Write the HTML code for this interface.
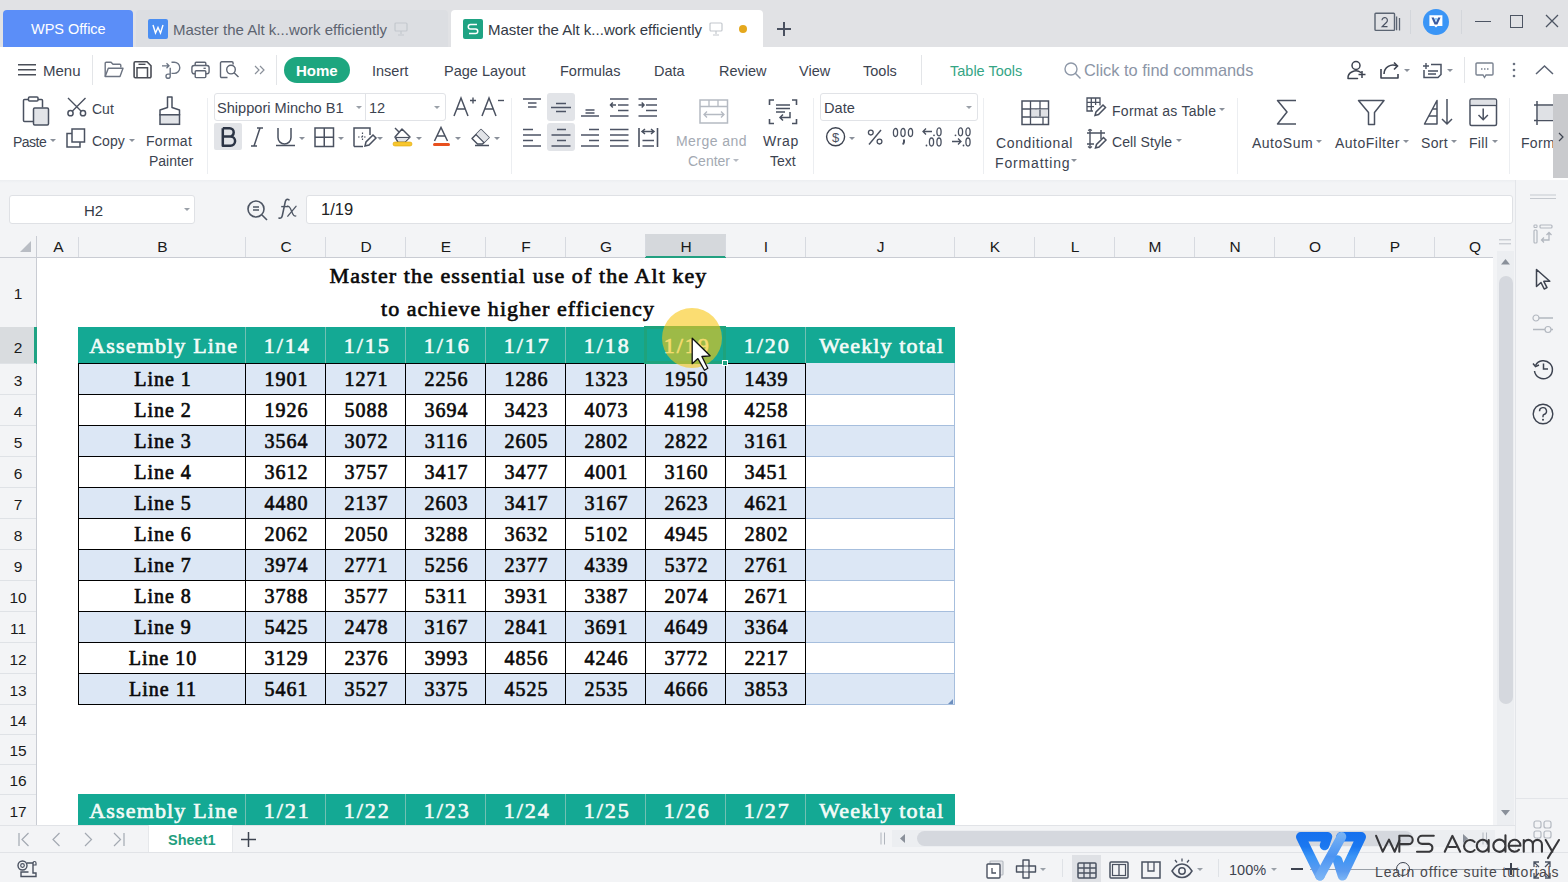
<!DOCTYPE html>
<html><head><meta charset="utf-8">
<style>
*{margin:0;padding:0;box-sizing:border-box}
html,body{width:1568px;height:882px;overflow:hidden;background:#fff;font-family:"Liberation Sans",sans-serif;color:#3c4350}
.a{position:absolute}
.t{position:absolute;white-space:nowrap;line-height:1}
svg{position:absolute;overflow:visible}
#titlebar{left:0;top:0;width:1568px;height:47px;background:#e1e2e5}
#menubar{left:0;top:47px;width:1568px;height:45px;background:#fff}
#ribbon{left:0;top:92px;width:1568px;height:88px;background:#fff}
#fbar{left:0;top:180px;width:1568px;height:56px;background:#f3f4f6}
#colhdr{left:0;top:236px;width:1493px;height:22px;background:#f3f4f6;border-bottom:1px solid #c9ccd3}
#rowhdr{left:0;top:258px;width:37px;height:567px;background:#f3f4f6;border-right:1px solid #c9ccd3}
#grid{left:37px;top:258px;width:1456px;height:567px;background:#fff}
#sheetbar{left:0;top:825px;width:1516px;height:27px;background:#f3f4f6;border-top:1px solid #e1e3e7}
#status{left:0;top:852px;width:1568px;height:30px;background:#f3f4f6;border-top:1px solid #e1e3e7}
#sidebar{left:1515px;top:180px;width:53px;height:672px;background:#f3f4f6;border-left:1px solid #e3e5e9}
.ch{position:absolute;top:0;height:21px;text-align:center;font-size:15.5px;line-height:21px;color:#1a1a1a}
.chs{position:absolute;top:1px;width:1px;height:20px;background:#d7dae0}
.rh{position:absolute;left:0;width:36px;text-align:center;font-size:15.5px;color:#1a1a1a}
.rhs{position:absolute;left:0;width:36px;height:1px;background:#dfe2e6}
.cell{position:absolute;text-align:center;font-family:"Liberation Serif",serif;font-weight:normal;-webkit-text-stroke:0.65px currentColor;white-space:nowrap}
.mi{font-size:15px;color:#3c4350}
.rb{font-size:14.5px;color:#3c4350}
.dd{position:absolute;width:0;height:0;border-left:4px solid transparent;border-right:4px solid transparent;border-top:4px solid #8a909a}
</style></head><body>

<!-- TITLE BAR -->
<div id="titlebar" class="a">
  <div class="a" style="left:3px;top:10px;width:130px;height:37px;background:#5b8ef8;border-radius:4px 4px 0 0"></div>
  <div class="t" style="left:31px;top:22px;font-size:14.5px;color:#fff">WPS Office</div>
  <div class="a" style="left:136px;top:10px;width:312px;height:37px;background:#dcdee2;border-radius:4px 4px 0 0"></div>
  <div class="a" style="left:148px;top:19px;width:20px;height:20px;background:#4a8ef2;border-radius:2px"></div>
  <svg style="left:148px;top:19px" width="20" height="20"><path d="M5 6 L7.5 14 L10 8.5 L12.5 14 L15 6" stroke="#fff" stroke-width="1.4" fill="none"/></svg>
  <div class="t" style="left:173px;top:22px;font-size:15px;color:#5d6470">Master the Alt k...work efficiently</div>
  <svg style="left:394px;top:22px" width="14" height="14"><rect x="1" y="1" width="12" height="8" rx="1" stroke="#c4c8ce" stroke-width="1.2" fill="none"/><path d="M7 9v3M4 13h6" stroke="#c4c8ce" stroke-width="1.2"/></svg>
  <div class="a" style="left:451px;top:10px;width:312px;height:37px;background:#fff;border-radius:4px 4px 0 0"></div>
  <div class="a" style="left:463px;top:19px;width:20px;height:20px;background:#1fa383;border-radius:2px"></div>
  <svg style="left:463px;top:19px" width="20" height="20"><path d="M14 5.5H7.5a2 2 0 0 0 0 4.5h5a2 2 0 0 1 0 4.5H6" stroke="#fff" stroke-width="1.5" fill="none"/></svg>
  <div class="t" style="left:488px;top:22px;font-size:15px;color:#333a45">Master the Alt k...work efficiently</div>
  <svg style="left:709px;top:22px" width="14" height="14"><rect x="1" y="1" width="12" height="8" rx="1" stroke="#c4c8ce" stroke-width="1.2" fill="none"/><path d="M7 9v3M4 13h6" stroke="#c4c8ce" stroke-width="1.2"/></svg>
  <div class="a" style="left:739px;top:25px;width:8px;height:8px;border-radius:4px;background:#e5a81d"></div>
  <svg style="left:776px;top:21px" width="16" height="16"><path d="M8 1v14M1 8h14" stroke="#4a5160" stroke-width="2"/></svg>
  <!-- right controls -->
  <svg style="left:1374px;top:11px" width="28" height="22"><rect x="1" y="2.2" width="19.5" height="17.2" rx="0.8" stroke="#5b6472" stroke-width="1.4" fill="none"/><path d="M22.6 5.5v13.8M25.5 7v12.5" stroke="#5b6472" stroke-width="1.3"/><path d="M8 9.2a2.7 2.7 0 1 1 4.6 2L8.2 15.7h5.3" stroke="#4a5262" stroke-width="1.2" fill="none"/></svg>
  <div class="a" style="left:1410px;top:10px;width:1px;height:24px;background:#d3d6db"></div>
  <div class="a" style="left:1423px;top:9px;width:26px;height:26px;border-radius:13px;background:#3a95f6"></div>
  <svg style="left:1423px;top:9px" width="26" height="26"><path d="M6.4 6.2h13v10.8h-4.8l-1.6 1.5-1.6-1.5H6.4z" fill="#fff"/><path d="M8.4 8.6h2.5l2.1 5 2.1-5h2.5l-3.2 6.8h-2.8z" fill="#3a5aa0"/><path d="M11.4 9l1.6 3.4 1.6-3.4" fill="#8fd0ff"/></svg>
  <div class="a" style="left:1461px;top:10px;width:1px;height:24px;background:#d3d6db"></div>
  <div class="a" style="left:1475px;top:21px;width:16px;height:1.3px;background:#4d5563"></div>
  <div class="a" style="left:1510px;top:15px;width:13px;height:13px;border:1.3px solid #4d5563"></div>
  <svg style="left:1545px;top:14px" width="14" height="14"><path d="M1 1L13 13M13 1L1 13" stroke="#4d5563" stroke-width="1.3"/></svg>
</div>

<!-- MENU BAR -->
<div id="menubar" class="a">
  <svg style="left:18px;top:17px" width="18" height="12"><path d="M0 0.75h18M0 5.75h18M0 10.75h18" stroke="#4a4f58" stroke-width="1.5"/></svg>
  <div class="t mi" style="left:43px;top:16px">Menu</div>
  <div class="a" style="left:92px;top:8px;width:1px;height:30px;background:#e3e5e8"></div>
  <svg style="left:104px;top:14px" width="20" height="18"><path d="M1.2 15.5V2.2a1 1 0 0 1 1-1H7l2 2h6.8a1 1 0 0 1 1 1V6.5" stroke="#6d7482" stroke-width="1.4" fill="none"/><path d="M1.2 15.5L4.3 7.2H19L16 15.5z" stroke="#6d7482" stroke-width="1.4" fill="none" stroke-linejoin="round"/></svg>
  <svg style="left:133px;top:14px" width="19" height="18"><path d="M2.3 0.8H14L18 4.8V15.5a1.2 1.2 0 0 1-1.2 1.2H2.3a1.2 1.2 0 0 1-1.2-1.2V2a1.2 1.2 0 0 1 1.2-1.2z" stroke="#4a4d55" stroke-width="1.6" fill="none"/><path d="M5.5 3.3H12.5" stroke="#4a4d55" stroke-width="1.4"/><path d="M4 16.5V6.8H14.5V16.5" stroke="#4a4d55" stroke-width="1.5" fill="none"/></svg>
  <svg style="left:161px;top:14px" width="21" height="19"><path d="M1 4.8h7M5.5 2.3L8 4.8 5.5 7.3" stroke="#6a7382" stroke-width="1.3" fill="none"/><path d="M10.5 1.2h2.7a5.6 5.6 0 0 1 0 11.2H10.5" stroke="#6a7382" stroke-width="1.4" fill="none"/><path d="M9.2 6.8V15.2a2.1 2.1 0 1 1-2.1-2.1h2.1" stroke="#6a7382" stroke-width="1.4" fill="none"/></svg>
  <svg style="left:191px;top:14px" width="19" height="18"><path d="M4.2 4.5V2.2a1 1 0 0 1 1-1h8.6a1 1 0 0 1 1 1V4.5" stroke="#5e6573" stroke-width="1.4" fill="none"/><rect x="0.9" y="4.5" width="17.2" height="8.3" rx="2.2" stroke="#5e6573" stroke-width="1.4" fill="none"/><rect x="4.2" y="9.8" width="10.6" height="6.8" rx="1" stroke="#5e6573" stroke-width="1.4" fill="#fff"/><path d="M12.5 7.3h2.3" stroke="#5e6573" stroke-width="1.3"/></svg>
  <svg style="left:219px;top:14px" width="21" height="18"><path d="M8.5 16.5H2.7a1.2 1.2 0 0 1-1.2-1.2V2a1.2 1.2 0 0 1 1.2-1.2h10.2a1.2 1.2 0 0 1 1.2 1.2V3.5" stroke="#5e6573" stroke-width="1.4" fill="none"/><circle cx="12" cy="8.6" r="4.3" stroke="#5e6573" stroke-width="1.4" fill="#fff"/><path d="M15.1 11.7L19.5 16" stroke="#5e6573" stroke-width="1.4"/></svg>
  <svg style="left:254px;top:18px" width="11" height="10"><path d="M1 1l4 4-4 4M6 1l4 4-4 4" stroke="#8a909a" stroke-width="1.2" fill="none"/></svg>
  <div class="a" style="left:276px;top:8px;width:1px;height:30px;background:#e3e5e8"></div>
  <div class="a" style="left:284px;top:10px;width:66px;height:26px;border-radius:13px;background:#1da67f"></div>
  <div class="t" style="left:296px;top:16px;font-size:15px;font-weight:bold;color:#fff">Home</div>
  <div class="t mi" style="left:372px;top:16.5px;font-size:14.5px">Insert</div>
  <div class="t mi" style="left:444px;top:16.5px;font-size:14.5px">Page Layout</div>
  <div class="t mi" style="left:560px;top:16.5px;font-size:14.5px">Formulas</div>
  <div class="t mi" style="left:654px;top:16.5px;font-size:14.5px">Data</div>
  <div class="t mi" style="left:719px;top:16.5px;font-size:14.5px">Review</div>
  <div class="t mi" style="left:799px;top:16.5px;font-size:14.5px">View</div>
  <div class="t mi" style="left:863px;top:16.5px;font-size:14.5px">Tools</div>
  <div class="a" style="left:921px;top:8px;width:1px;height:30px;background:#e3e5e8"></div>
  <div class="t mi" style="left:950px;top:16.5px;font-size:14.5px;color:#35a585">Table Tools</div>
  <svg style="left:1064px;top:15px" width="18" height="18"><circle cx="7" cy="7" r="6" stroke="#8e98a8" stroke-width="1.4" fill="none"/><path d="M11.3 11.3L16.5 16.5" stroke="#8e98a8" stroke-width="1.5"/></svg>
  <div class="t" style="left:1084px;top:15px;font-size:16.4px;color:#8b95a6">Click to find commands</div>
  <svg style="left:1347px;top:13px" width="21" height="20"><circle cx="9" cy="5.5" r="4" stroke="#3d4350" stroke-width="1.5" fill="none"/><path d="M1 18.5a8 7 0 0 1 13-6M1 18.5h9.5" stroke="#3d4350" stroke-width="1.5" fill="none" stroke-linecap="round"/><path d="M15 11v7M11.5 14.5h7" stroke="#3d4350" stroke-width="1.5"/></svg>
  <svg style="left:1380px;top:14px" width="22" height="18"><path d="M1 8v9h17v-4" stroke="#3d4350" stroke-width="1.6" fill="none" stroke-linejoin="round"/><path d="M4 13a9 9 0 0 1 13-8" stroke="#3d4350" stroke-width="1.6" fill="none"/><path d="M14 1.5l3.5 3.5L14 8.5" stroke="#3d4350" stroke-width="1.6" fill="none"/></svg>
  <div class="dd" style="left:1404px;top:22px;border-width:3.5px 3.5px 0 3.5px"></div>
  <svg style="left:1422px;top:14px" width="22" height="19"><path d="M1 5h6M4 2v6" stroke="#4a5262" stroke-width="1.4"/><path d="M9 3.5h10v10l-3 3H2V9" stroke="#4a5262" stroke-width="1.5" fill="none"/><path d="M6 10h10M6 13h8" stroke="#4a5262" stroke-width="1.4"/></svg>
  <div class="dd" style="left:1447px;top:22px;border-width:3.5px 3.5px 0 3.5px"></div>
  <div class="a" style="left:1464px;top:10px;width:1px;height:26px;background:#e3e5e8"></div>
  <svg style="left:1475px;top:15px" width="19" height="17"><path d="M2 1h15a1 1 0 0 1 1 1v10a1 1 0 0 1-1 1h-6l-1.5 2.5L8 13H2a1 1 0 0 1-1-1V2a1 1 0 0 1 1-1z" stroke="#7a8290" stroke-width="1.4" fill="none"/><path d="M6 7h1.5M9 7h1.5M12 7h1.5" stroke="#7a8290" stroke-width="1.4"/></svg>
  <svg style="left:1512px;top:15px" width="4" height="16"><circle cx="2" cy="2" r="1.3" fill="#6a7180"/><circle cx="2" cy="8" r="1.3" fill="#6a7180"/><circle cx="2" cy="14" r="1.3" fill="#6a7180"/></svg>
  <svg style="left:1535px;top:18px" width="19" height="10"><path d="M1 9l8.5-8 8.5 8" stroke="#5a6272" stroke-width="1.5" fill="none"/></svg>
</div>

<!-- RIBBON -->
<div id="ribbon" class="a">
  <!-- clipboard -->
  <svg style="left:22px;top:4px" width="28" height="30"><path d="M6 3.5H2.5a1 1 0 0 0-1 1v20a1 1 0 0 0 1 1h8.5" stroke="#4a5160" stroke-width="1.5" fill="none"/><path d="M16 3.5h3.5a1 1 0 0 1 1 1v7" stroke="#4a5160" stroke-width="1.5" fill="none"/><rect x="6.5" y="1" width="9.5" height="4" rx="1" stroke="#4a5160" stroke-width="1.5" fill="none"/><rect x="11.5" y="12" width="15" height="17" rx="1.2" stroke="#4a5160" stroke-width="1.5" fill="#e2e4e8"/></svg>
  <div class="t rb" style="left:13px;top:42.5px;font-size:14px;letter-spacing:-0.5px">Paste</div>
  <div class="dd" style="left:50px;top:47px;border-width:3px 3px 0 3px"></div>
  <svg style="left:66px;top:5px" width="22" height="20"><path d="M2 1l13 13M19.5 1L6.5 14" stroke="#4a5160" stroke-width="1.4"/><circle cx="4.5" cy="16.2" r="2.6" stroke="#4a5160" stroke-width="1.5" fill="none"/><circle cx="17" cy="16.2" r="2.6" stroke="#4a5160" stroke-width="1.5" fill="none"/></svg>
  <div class="t rb" style="left:92px;top:10px;font-size:14px">Cut</div>
  <svg style="left:66px;top:36px" width="20" height="20"><rect x="6" y="1" width="12.5" height="13" stroke="#4a5160" stroke-width="1.5" fill="none"/><path d="M6 5.5H1v13.5h13V14" stroke="#4a5160" stroke-width="1.5" fill="none"/></svg>
  <div class="t rb" style="left:92px;top:42px;font-size:14px">Copy</div>
  <div class="dd" style="left:129px;top:47px;border-width:3px 3px 0 3px"></div>
  <svg style="left:158px;top:4px" width="24" height="30"><path d="M9.5 1h4.5v10.5l7.5 2.5v5H2v-5l7.5-2.5z" stroke="#4a5160" stroke-width="1.5" fill="none" stroke-linejoin="round"/><rect x="2" y="18.8" width="19.5" height="9.5" stroke="#4a5160" stroke-width="1.5" fill="#e2e4e8"/></svg>
  <div class="t rb" style="left:146px;top:42px;font-size:14px;letter-spacing:0.3px">Format</div>
  <div class="t rb" style="left:149px;top:62px;font-size:14px">Painter</div>
  <div class="a" style="left:207px;top:6px;width:1px;height:76px;background:#eceef1"></div>
  <!-- font -->
  <div class="a" style="left:214px;top:1px;width:232px;height:28px;border:1px solid #e1e3e7;border-radius:3px"></div>
  <div class="a" style="left:365px;top:2px;width:1px;height:26px;background:#e1e3e7"></div>
  <div class="t" style="left:217px;top:9px;font-size:14.6px;color:#3c4350">Shippori Mincho B1</div>
  <div class="dd" style="left:356px;top:14px;border-width:3.5px 3.5px 0 3.5px;border-top-color:#9aa0a8"></div>
  <div class="t" style="left:369px;top:9px;font-size:14.6px;color:#3c4350">12</div>
  <div class="dd" style="left:434px;top:14px;border-width:3.5px 3.5px 0 3.5px;border-top-color:#9aa0a8"></div>
  <svg style="left:453px;top:4px" width="24" height="22"><path d="M1 20L8 2l7 18M3.8 13h8.5" stroke="#4a5160" stroke-width="1.5" fill="none"/><path d="M17 4.5h6M20 1.5v6" stroke="#4a5160" stroke-width="1.4"/></svg>
  <svg style="left:481px;top:4px" width="24" height="22"><path d="M1 20L8 2l7 18M3.8 13h8.5" stroke="#4a5160" stroke-width="1.5" fill="none"/><path d="M17 4.5h6" stroke="#4a5160" stroke-width="1.4"/></svg>
  <div class="a" style="left:214px;top:31px;width:28px;height:27px;background:#e2e4e8;border-radius:2px"></div>
  <svg style="left:220px;top:35px" width="18" height="21"><path d="M2.8 1.3V18.7H10.5a4.6 4.6 0 0 0 0-9.2H2.8M2.8 1.3H9.6a4.1 4.1 0 0 1 0 8.2" stroke="#2b3445" stroke-width="2.5" fill="none" stroke-linejoin="round"/></svg>
  <svg style="left:250px;top:35px" width="14" height="20"><path d="M10 1L4 19M7 1h6M1 19h6" stroke="#4a5160" stroke-width="1.5"/></svg>
  <svg style="left:275px;top:35px" width="21" height="20"><path d="M3 1v9.5a6.5 6.5 0 0 0 13 0V1" stroke="#4a5160" stroke-width="1.5" fill="none"/><path d="M1 18.5h19" stroke="#4a5160" stroke-width="1.5"/></svg>
  <div class="dd" style="left:299px;top:45px;border-width:3.5px 3.5px 0 3.5px;border-top-color:#8a909a"></div>
  <svg style="left:314px;top:35px" width="21" height="21"><rect x="1" y="1" width="18.5" height="18.5" stroke="#4a5160" stroke-width="1.5" fill="none"/><path d="M10.25 1v18.5M1 10.25h18.5" stroke="#4a5160" stroke-width="1.5"/></svg>
  <div class="dd" style="left:338px;top:45px;border-width:3.5px 3.5px 0 3.5px;border-top-color:#8a909a"></div>
  <svg style="left:353px;top:35px" width="23" height="21"><path d="M1 19.5V1h16v7" stroke="#4a5160" stroke-width="1.5" fill="none"/><path d="M5 10h9M9.5 5.5v9" stroke="#4a5160" stroke-width="1.2" stroke-dasharray="1.6 1.4"/><path d="M1 19.5h9" stroke="#4a5160" stroke-width="1.5"/><path d="M12 19l1-4 7-7 3 3-7 7z" stroke="#4a5160" stroke-width="1.5" fill="none"/></svg>
  <div class="dd" style="left:377px;top:45px;border-width:3.5px 3.5px 0 3.5px;border-top-color:#8a909a"></div>
  <svg style="left:392px;top:34px" width="22" height="21"><path d="M3 11L10 3l8 8-5 5H6z" stroke="#4a5160" stroke-width="1.5" fill="none" stroke-linejoin="round"/><path d="M4 11.5h13" stroke="#4a5160" stroke-width="1.2"/><path d="M5 12l1.5 3.5h6.5l3.5-3.5" fill="#e2e4e8"/><path d="M7 6L3 2" stroke="#4a5160" stroke-width="1.5"/><rect x="1" y="16" width="19" height="4" rx="2" fill="#f7c62f" stroke="#e0a800" stroke-width="0.6"/></svg>
  <div class="dd" style="left:416px;top:45px;border-width:3.5px 3.5px 0 3.5px;border-top-color:#8a909a"></div>
  <svg style="left:432px;top:34px" width="20" height="21"><path d="M2.5 15L9 1.5 15.5 15M5 10h8.5" stroke="#4a5160" stroke-width="1.5" fill="none"/><rect x="1" y="17" width="17" height="3" rx="1.5" fill="#e8501e"/></svg>
  <div class="dd" style="left:455px;top:45px;border-width:3.5px 3.5px 0 3.5px;border-top-color:#8a909a"></div>
  <svg style="left:470px;top:35px" width="22" height="20"><path d="M2 11.5L11 2.5l8 8-6.5 6.5h-5z" stroke="#4a5160" stroke-width="1.5" fill="none" stroke-linejoin="round"/><path d="M6 7.5l8 8" stroke="#4a5160" stroke-width="1.5"/><path d="M11 2.5l8 8-4.5 4.5-8-8z" fill="#e2e4e8"/><path d="M5 18.5h14" stroke="#4a5160" stroke-width="1.5"/></svg>
  <div class="dd" style="left:494px;top:45px;border-width:3.5px 3.5px 0 3.5px;border-top-color:#8a909a"></div>
  <div class="a" style="left:511px;top:6px;width:1px;height:76px;background:#eceef1"></div>
  <!-- align -->
  <div class="a" style="left:547px;top:1px;width:28px;height:28px;background:#e2e4e8;border-radius:3px"></div>
  <div class="a" style="left:547px;top:31px;width:28px;height:28px;background:#e2e4e8;border-radius:3px"></div>
  <svg style="left:0;top:0" width="700" height="80"><path d="M523 7H541M528 11H536.5M528 15H536.5M556 11.5H566M551 15.5H571M556 19.5H566M585.5 18H594.5M585.5 21H594.5M581 24H599M610 7H628.5M618 13H628.5M618 18.5H628.5M610 24H628.5M638.5 7H657M646 13H657M646 18.5H657M638.5 24H657M523 37.5H533M523 43H541M523 48.5H533M523 54H541M557 37.5H566M551.5 43H570.5M557 48.5H566M551.5 54H570.5M589 37.5H599M581 43H599M589 48.5H599M581 54H599M610 37.5H628.5M610 43H628.5M610 48.5H628.5M610 54H628.5M642.5 48.5H654M642.5 54H654" stroke="#4d5465" stroke-width="1.65" fill="none"/>
  <path d="M639 36V55M657.5 36V55" stroke="#4a5160" stroke-width="1.6"/>
  <path d="M642 39.5H654M645 37L642 39.5L645 42M651 37L654 39.5L651 42" stroke="#4a5160" stroke-width="1.5" fill="none"/>
  <path d="M610.5 13H616M612.8 10.5L610.5 13L612.8 15.5" stroke="#4a5160" stroke-width="1.5" fill="none"/>
  <path d="M638.5 13H644M641.7 10.5L644 13L641.7 15.5" stroke="#4a5160" stroke-width="1.5" fill="none"/>
</svg>
  <svg style="left:699px;top:7px" width="30" height="25"><rect x="1" y="1" width="27.5" height="23" stroke="#b5bac2" stroke-width="1.5" fill="none"/><path d="M1 7.5h27.5M10 1v6.5M19 1v6.5M5 15.5h20M8 12.5l-3 3 3 3M22 12.5l3 3-3 3" stroke="#b5bac2" stroke-width="1.3" fill="none"/></svg>
  <div class="t" style="left:676px;top:42px;font-size:14px;color:#a3a9b2;letter-spacing:0.45px">Merge and</div>
  <div class="t" style="left:688px;top:62px;font-size:14px;color:#a3a9b2">Center</div>
  <div class="dd" style="left:733px;top:67px;border-width:3px 3px 0 3px;border-top-color:#b5bac2"></div>
  <svg style="left:768px;top:7px" width="30" height="26"><path d="M6 1H1.5v5M24 1h4.5v5M1.5 20v4.5H6M28.5 20v4.5H24" stroke="#4a5160" stroke-width="1.6" fill="none"/><path d="M8 6h14M8 9.5h14M8 13h9" stroke="#4a5160" stroke-width="1.4"/><path d="M22 13v5.5H12M15 15.5l-3 3 3 3" stroke="#4a5160" stroke-width="1.5" fill="none"/></svg>
  <div class="t rb" style="left:763px;top:42px;font-size:14px;letter-spacing:0.7px">Wrap</div>
  <div class="t rb" style="left:770px;top:62px;font-size:14px">Text</div>
  <div class="a" style="left:813px;top:6px;width:1px;height:76px;background:#eceef1"></div>
  <!-- number -->
  <div class="a" style="left:820px;top:1px;width:158px;height:28px;border:1px solid #e1e3e7;border-radius:3px"></div>
  <div class="t" style="left:824px;top:9px;font-size:14.6px;color:#3c4350">Date</div>
  <div class="dd" style="left:966px;top:14px;border-width:3.5px 3.5px 0 3.5px;border-top-color:#9aa0a8"></div>
  <svg style="left:815px;top:28px" width="170" height="35"><circle cx="20.6" cy="16.8" r="9" stroke="#3d4350" stroke-width="1.4" fill="none"/><text x="20.6" y="21.5" font-size="13" text-anchor="middle" fill="#4a5160" font-family="Liberation Sans">$</text><circle cx="55.8" cy="12.6" r="2.4" stroke="#4a5160" fill="none" stroke-width="1.3"/><circle cx="64.5" cy="21.6" r="2.4" stroke="#4a5160" fill="none" stroke-width="1.3"/><path d="M54 24.5L66 10" stroke="#4a5160" stroke-width="1.4"/><ellipse cx="80.5" cy="12.5" rx="2.1" ry="4" stroke="#4a5160" fill="none" stroke-width="1.3"/><ellipse cx="88" cy="12.5" rx="2.1" ry="4" stroke="#4a5160" fill="none" stroke-width="1.3"/><ellipse cx="95.5" cy="12.5" rx="2.1" ry="4" stroke="#4a5160" fill="none" stroke-width="1.3"/><path d="M89 19.5v2.5l-1 2.5" stroke="#4a5160" stroke-width="2" fill="none"/><path d="M108 11.5h9M111 8.5l-3 3 3 3" stroke="#4a5160" stroke-width="1.3" fill="none"/><circle cx="119" cy="15.3" r="0.9" fill="#4a5160"/><ellipse cx="124" cy="11.8" rx="2.1" ry="4" stroke="#4a5160" fill="none" stroke-width="1.3"/><circle cx="111.5" cy="25.5" r="0.9" fill="#4a5160"/><ellipse cx="116.5" cy="22" rx="2.1" ry="4" stroke="#4a5160" fill="none" stroke-width="1.3"/><ellipse cx="124" cy="22" rx="2.1" ry="4" stroke="#4a5160" fill="none" stroke-width="1.3"/><circle cx="140.5" cy="15.3" r="0.9" fill="#4a5160"/><ellipse cx="145.5" cy="11.8" rx="2.1" ry="4" stroke="#4a5160" fill="none" stroke-width="1.3"/><ellipse cx="153" cy="11.8" rx="2.1" ry="4" stroke="#4a5160" fill="none" stroke-width="1.3"/><path d="M137 21.5h9M143 18.5l3 3-3 3" stroke="#4a5160" stroke-width="1.3" fill="none"/><circle cx="148.5" cy="25.5" r="0.9" fill="#4a5160"/><ellipse cx="153" cy="22" rx="2.1" ry="4" stroke="#4a5160" fill="none" stroke-width="1.3"/></svg>
  <div class="dd" style="left:849px;top:45px;border-width:3.5px 3.5px 0 3.5px;border-top-color:#8a909a"></div>
  <div class="a" style="left:983px;top:6px;width:1px;height:76px;background:#eceef1"></div>
  <!-- styles -->
  <svg style="left:1021px;top:8px" width="29" height="26"><rect x="1" y="1" width="26.5" height="23.5" stroke="#4a5160" stroke-width="1.5" fill="none"/><path d="M1 9h26.5M1 17h26.5M9.5 1v23.5M19 1v8M15 9v8M22 17v7.5" stroke="#4a5160" stroke-width="1.3"/><rect x="10" y="9.5" width="17" height="7" fill="#dfe1e5"/><path d="M9.5 9v8M19 9.5v7" stroke="#4a5160" stroke-width="1.3"/></svg>
  <div class="t rb" style="left:996px;top:43.5px;font-size:14px;letter-spacing:0.64px">Conditional</div>
  <div class="t rb" style="left:995px;top:63.5px;font-size:14px;letter-spacing:0.85px">Formatting</div>
  <div class="dd" style="left:1071px;top:67px;border-width:3px 3px 0 3px"></div>
  <svg style="left:1086px;top:5px" width="22" height="20"><path d="M14 8.5V1H1v13h6M1 5.3h13M1 9.6h7M5.3 1v13M9.6 1v7" stroke="#4a5160" stroke-width="1.3" fill="none"/><path d="M9 18.5l1-3.5 7-7 2.5 2.5-7 7z" stroke="#4a5160" stroke-width="1.5" fill="none"/></svg>
  <div class="t rb" style="left:1112px;top:11.5px;font-size:14px;letter-spacing:0.28px">Format as Table</div>
  <div class="dd" style="left:1219px;top:16px;border-width:3px 3px 0 3px"></div>
  <svg style="left:1086px;top:37px" width="22" height="20"><path d="M4 1v18M1 4h18M15 1v9M1 15h7" stroke="#4a5160" stroke-width="1.4"/><path d="M2 1.5l2 -1 2 1M2 17.5l2 1.5 2-1.5" stroke="#4a5160" stroke-width="1.2" fill="none"/><path d="M9.5 19l1-3.5 7-7 2.5 2.5-7 7z" stroke="#4a5160" stroke-width="1.5" fill="none"/></svg>
  <div class="t rb" style="left:1112px;top:43px;font-size:14px;letter-spacing:0.1px">Cell Style</div>
  <div class="dd" style="left:1176px;top:47px;border-width:3px 3px 0 3px"></div>
  <div class="a" style="left:1237px;top:6px;width:1px;height:76px;background:#eceef1"></div>
  <!-- editing -->
  <svg style="left:1275px;top:7px" width="23" height="27"><path d="M21 1.5H2.5L12 13 2.5 25H21" stroke="#4a5160" stroke-width="1.5" fill="none" stroke-linejoin="round"/></svg>
  <div class="t rb" style="left:1252px;top:43.5px;font-size:14px;letter-spacing:0.5px">AutoSum</div>
  <div class="dd" style="left:1316px;top:48px;border-width:3px 3px 0 3px"></div>
  <svg style="left:1357px;top:7px" width="29" height="27"><path d="M1.5 1.5h25.5L17.5 13.5V25.5h-6V13.5z" stroke="#4a5160" stroke-width="1.5" fill="none" stroke-linejoin="round"/></svg>
  <div class="t rb" style="left:1335px;top:43.5px;font-size:14px;letter-spacing:0.5px">AutoFilter</div>
  <div class="dd" style="left:1403px;top:48px;border-width:3px 3px 0 3px"></div>
  <svg style="left:1423px;top:6px" width="31" height="28"><path d="M1.5 26L14 2.5V26z" stroke="#4a5160" stroke-width="1.5" fill="none" stroke-linejoin="round"/><path d="M6 18h8M10 11h4" stroke="#4a5160" stroke-width="1.3"/><path d="M24 1v25M19 21l5 5 5-5" stroke="#4a5160" stroke-width="1.5" fill="none"/></svg>
  <div class="t rb" style="left:1421px;top:43.5px;font-size:14px;letter-spacing:0.3px">Sort</div>
  <div class="dd" style="left:1451px;top:48px;border-width:3px 3px 0 3px"></div>
  <svg style="left:1469px;top:6px" width="29" height="29"><rect x="1" y="1" width="26.5" height="26.5" rx="1.5" stroke="#4a5160" stroke-width="1.5" fill="none"/><rect x="1.8" y="1.8" width="25" height="5.5" fill="#dfe1e5"/><path d="M1 7.5h26.5" stroke="#4a5160" stroke-width="1.3"/><path d="M14.2 10.5v11M9.5 17l4.7 4.7 4.7-4.7" stroke="#4a5160" stroke-width="1.5" fill="none"/></svg>
  <div class="t rb" style="left:1469px;top:43.5px;font-size:14px;letter-spacing:0.3px">Fill</div>
  <div class="dd" style="left:1492px;top:48px;border-width:3px 3px 0 3px"></div>
  <div class="a" style="left:1509px;top:6px;width:1px;height:76px;background:#eceef1"></div>
  <svg style="left:1533px;top:8px" width="22" height="25"><path d="M4 1v24M1 5h21M1 20.5h21" stroke="#4a5160" stroke-width="1.5"/><rect x="5" y="6" width="17" height="14" fill="#dfe1e5"/></svg>
  <div class="t rb" style="left:1521px;top:43.5px;font-size:14px;letter-spacing:0.3px">Form</div>
  <div class="a" style="left:1553px;top:2px;width:15px;height:84px;background:#c9cacd"></div>
  <svg style="left:1558px;top:40px" width="6" height="10"><path d="M1 1l4 4-4 4" stroke="#3d4350" stroke-width="1.2" fill="none"/></svg>
  
</div>

<!-- FORMULA BAR -->
<div id="fbar" class="a">
  <div class="a" style="left:0;top:0;width:1568px;height:3px;background:linear-gradient(#eceef1,#f3f4f6)"></div>
  <div class="a" style="left:9px;top:15px;width:186px;height:29px;background:#fff;border:1px solid #dfe1e5;border-radius:3px"></div>
  <div class="t" style="left:84px;top:23px;font-size:15px;color:#333a45">H2</div>
  <div class="dd" style="left:184px;top:28px;border-width:3px 3px 0 3px;border-top-color:#9aa0a8"></div>
  <svg style="left:246px;top:19px" width="24" height="24"><circle cx="10" cy="10" r="8" stroke="#4d5563" stroke-width="1.6" fill="none"/><path d="M16 16l5 5" stroke="#4d5563" stroke-width="1.6"/><path d="M7 8h6M7 11h6" stroke="#4d5563" stroke-width="1.3"/></svg>
  <svg style="left:276px;top:17px" width="22" height="24"><path d="M13 2.8C11.3 1.6 9.8 2.4 9.3 4.6L6.3 18.6C5.8 20.9 4.4 21.6 3 21" stroke="#4d5563" stroke-width="1.6" fill="none" stroke-linecap="round"/><path d="M5.2 9.6H12.6" stroke="#4d5563" stroke-width="1.4"/><path d="M11.5 9.2C12.9 9 13.6 9.8 14.4 11.6L16.8 17C17.6 18.8 18.4 19.4 19.8 19" stroke="#4d5563" stroke-width="1.3" fill="none" stroke-linecap="round"/><path d="M20 9.3L11.8 19.2" stroke="#4d5563" stroke-width="1.3" stroke-linecap="round"/></svg>
  <div class="a" style="left:306px;top:15px;width:1207px;height:29px;background:#fff;border:1px solid #dfe1e5;border-radius:3px"></div>
  <div class="t" style="left:321px;top:21px;font-size:16.5px;color:#222">1/19</div>
</div>

<!-- COLUMN HEADERS -->
<div id="colhdr" class="a"><div class="ch" style="left:38px;width:41px">A</div>
<div class="ch" style="left:79px;width:167px">B</div>
<div class="chs" style="left:78px"></div>
<div class="ch" style="left:246px;width:80px">C</div>
<div class="chs" style="left:245px"></div>
<div class="ch" style="left:326px;width:80px">D</div>
<div class="chs" style="left:325px"></div>
<div class="ch" style="left:406px;width:80px">E</div>
<div class="chs" style="left:405px"></div>
<div class="ch" style="left:486px;width:80px">F</div>
<div class="chs" style="left:485px"></div>
<div class="ch" style="left:566px;width:80px">G</div>
<div class="chs" style="left:565px"></div>
<div class="a" style="left:645px;top:-2px;width:81px;height:24px;background:#d5d8dc;border-bottom:2px solid #22a081"></div>
<div class="ch" style="left:646px;width:80px">H</div>
<div class="chs" style="left:645px"></div>
<div class="ch" style="left:726px;width:80px">I</div>
<div class="chs" style="left:725px"></div>
<div class="ch" style="left:806px;width:149px">J</div>
<div class="chs" style="left:805px"></div>
<div class="ch" style="left:955px;width:80px">K</div>
<div class="chs" style="left:954px"></div>
<div class="ch" style="left:1035px;width:80px">L</div>
<div class="chs" style="left:1034px"></div>
<div class="ch" style="left:1115px;width:80px">M</div>
<div class="chs" style="left:1114px"></div>
<div class="ch" style="left:1195px;width:80px">N</div>
<div class="chs" style="left:1194px"></div>
<div class="ch" style="left:1275px;width:80px">O</div>
<div class="chs" style="left:1274px"></div>
<div class="ch" style="left:1355px;width:80px">P</div>
<div class="chs" style="left:1354px"></div>
<div class="ch" style="left:1435px;width:80px">Q</div>
<div class="chs" style="left:1434px"></div>
<svg style="left:20px;top:5px" width="11" height="11"><path d="M11 0V11H0Z" fill="#b9bdc4"/></svg><svg style="display:none"><path d="M12 0V12H0Z" fill="#b9bdc4"/></svg>
<div class="chs" style="left:36px;top:0;height:21px;background:#c9ccd3"></div></div>
<div id="rowhdr" class="a"><div class="rh" style="top:28.0px;line-height:15px">1</div>
<div class="rhs" style="top:69px"></div>
<div class="a" style="left:0;top:69px;width:36px;height:37px;background:#d9dcdf"></div>
<div class="a" style="left:34px;top:69px;width:3px;height:37px;background:#1fa383"></div>
<div class="rh" style="top:81.5px;line-height:15px">2</div>
<div class="rhs" style="top:105px"></div>
<div class="rh" style="top:115.0px;line-height:15px">3</div>
<div class="rhs" style="top:136px"></div>
<div class="rh" style="top:146.0px;line-height:15px">4</div>
<div class="rhs" style="top:167px"></div>
<div class="rh" style="top:177.0px;line-height:15px">5</div>
<div class="rhs" style="top:198px"></div>
<div class="rh" style="top:208.0px;line-height:15px">6</div>
<div class="rhs" style="top:229px"></div>
<div class="rh" style="top:239.0px;line-height:15px">7</div>
<div class="rhs" style="top:260px"></div>
<div class="rh" style="top:270.0px;line-height:15px">8</div>
<div class="rhs" style="top:291px"></div>
<div class="rh" style="top:301.0px;line-height:15px">9</div>
<div class="rhs" style="top:322px"></div>
<div class="rh" style="top:332.0px;line-height:15px">10</div>
<div class="rhs" style="top:353px"></div>
<div class="rh" style="top:363.0px;line-height:15px">11</div>
<div class="rhs" style="top:384px"></div>
<div class="rh" style="top:394.0px;line-height:15px">12</div>
<div class="rhs" style="top:415px"></div>
<div class="rh" style="top:425.0px;line-height:15px">13</div>
<div class="rhs" style="top:446px"></div>
<div class="rh" style="top:454.5px;line-height:15px">14</div>
<div class="rhs" style="top:476px"></div>
<div class="rh" style="top:484.5px;line-height:15px">15</div>
<div class="rhs" style="top:506px"></div>
<div class="rh" style="top:514.5px;line-height:15px">16</div>
<div class="rhs" style="top:536px"></div>
<div class="rh" style="top:546.0px;line-height:15px">17</div>
<div class="rhs" style="top:567px"></div></div>
<div id="grid" class="a"><div class="cell" style="left:43px;top:4.5px;width:877px;color:#0a0a0a;font-size:22px;letter-spacing:1.09px;line-height:26px">Master the essential use of the Alt key</div>
<div class="cell" style="left:42.5px;top:38px;width:877px;color:#0a0a0a;font-size:22px;letter-spacing:1.05px;line-height:26px">to achieve higher efficiency</div>
<div class="a" style="left:41px;top:69px;width:877px;height:36px;background:#14a994"></div>
<div class="a" style="left:208px;top:69px;width:1px;height:36px;background:#72c0b2"></div>
<div class="a" style="left:288px;top:69px;width:1px;height:36px;background:#72c0b2"></div>
<div class="a" style="left:368px;top:69px;width:1px;height:36px;background:#72c0b2"></div>
<div class="a" style="left:448px;top:69px;width:1px;height:36px;background:#72c0b2"></div>
<div class="a" style="left:528px;top:69px;width:1px;height:36px;background:#72c0b2"></div>
<div class="a" style="left:608px;top:69px;width:1px;height:36px;background:#72c0b2"></div>
<div class="a" style="left:688px;top:69px;width:1px;height:36px;background:#72c0b2"></div>
<div class="a" style="left:768px;top:69px;width:1px;height:36px;background:#72c0b2"></div>
<div class="cell" style="left:43.2px;top:75px;width:167px;font-size:22px;line-height:26px;color:#f3fbf8;letter-spacing:1.15px">Assembly Line</div>
<div class="cell" style="left:210.2px;top:75px;width:80px;font-size:22px;line-height:26px;color:#f3fbf8;letter-spacing:2px">1/14</div>
<div class="cell" style="left:290.2px;top:75px;width:80px;font-size:22px;line-height:26px;color:#f3fbf8;letter-spacing:2px">1/15</div>
<div class="cell" style="left:370.2px;top:75px;width:80px;font-size:22px;line-height:26px;color:#f3fbf8;letter-spacing:2px">1/16</div>
<div class="cell" style="left:450.2px;top:75px;width:80px;font-size:22px;line-height:26px;color:#f3fbf8;letter-spacing:2px">1/17</div>
<div class="cell" style="left:530.2px;top:75px;width:80px;font-size:22px;line-height:26px;color:#f3fbf8;letter-spacing:2px">1/18</div>
<div class="cell" style="left:610.2px;top:75px;width:80px;font-size:22px;line-height:26px;color:#f3fbf8;letter-spacing:2px">1/19</div>
<div class="cell" style="left:690.2px;top:75px;width:80px;font-size:22px;line-height:26px;color:#f3fbf8;letter-spacing:2px">1/20</div>
<div class="cell" style="left:770.2px;top:75px;width:149px;font-size:22px;line-height:26px;color:#f3fbf8;letter-spacing:1.15px">Weekly total</div>
<div class="a" style="left:41px;top:105px;width:877px;height:31px;background:#dce7f5"></div>
<div class="cell" style="left:42px;top:110px;width:167px;font-size:20px;line-height:23px;letter-spacing:1px;text-indent:1px;color:#0a0a0a">Line 1</div>
<div class="cell" style="left:209px;top:110px;width:80px;font-size:20px;line-height:23px;letter-spacing:1px;text-indent:1px;color:#0a0a0a">1901</div>
<div class="cell" style="left:289px;top:110px;width:80px;font-size:20px;line-height:23px;letter-spacing:1px;text-indent:1px;color:#0a0a0a">1271</div>
<div class="cell" style="left:369px;top:110px;width:80px;font-size:20px;line-height:23px;letter-spacing:1px;text-indent:1px;color:#0a0a0a">2256</div>
<div class="cell" style="left:449px;top:110px;width:80px;font-size:20px;line-height:23px;letter-spacing:1px;text-indent:1px;color:#0a0a0a">1286</div>
<div class="cell" style="left:529px;top:110px;width:80px;font-size:20px;line-height:23px;letter-spacing:1px;text-indent:1px;color:#0a0a0a">1323</div>
<div class="cell" style="left:609px;top:110px;width:80px;font-size:20px;line-height:23px;letter-spacing:1px;text-indent:1px;color:#0a0a0a">1950</div>
<div class="cell" style="left:689px;top:110px;width:80px;font-size:20px;line-height:23px;letter-spacing:1px;text-indent:1px;color:#0a0a0a">1439</div>
<div class="a" style="left:41px;top:136px;width:877px;height:31px;background:#fff"></div>
<div class="cell" style="left:42px;top:141px;width:167px;font-size:20px;line-height:23px;letter-spacing:1px;text-indent:1px;color:#0a0a0a">Line 2</div>
<div class="cell" style="left:209px;top:141px;width:80px;font-size:20px;line-height:23px;letter-spacing:1px;text-indent:1px;color:#0a0a0a">1926</div>
<div class="cell" style="left:289px;top:141px;width:80px;font-size:20px;line-height:23px;letter-spacing:1px;text-indent:1px;color:#0a0a0a">5088</div>
<div class="cell" style="left:369px;top:141px;width:80px;font-size:20px;line-height:23px;letter-spacing:1px;text-indent:1px;color:#0a0a0a">3694</div>
<div class="cell" style="left:449px;top:141px;width:80px;font-size:20px;line-height:23px;letter-spacing:1px;text-indent:1px;color:#0a0a0a">3423</div>
<div class="cell" style="left:529px;top:141px;width:80px;font-size:20px;line-height:23px;letter-spacing:1px;text-indent:1px;color:#0a0a0a">4073</div>
<div class="cell" style="left:609px;top:141px;width:80px;font-size:20px;line-height:23px;letter-spacing:1px;text-indent:1px;color:#0a0a0a">4198</div>
<div class="cell" style="left:689px;top:141px;width:80px;font-size:20px;line-height:23px;letter-spacing:1px;text-indent:1px;color:#0a0a0a">4258</div>
<div class="a" style="left:41px;top:167px;width:877px;height:31px;background:#dce7f5"></div>
<div class="cell" style="left:42px;top:172px;width:167px;font-size:20px;line-height:23px;letter-spacing:1px;text-indent:1px;color:#0a0a0a">Line 3</div>
<div class="cell" style="left:209px;top:172px;width:80px;font-size:20px;line-height:23px;letter-spacing:1px;text-indent:1px;color:#0a0a0a">3564</div>
<div class="cell" style="left:289px;top:172px;width:80px;font-size:20px;line-height:23px;letter-spacing:1px;text-indent:1px;color:#0a0a0a">3072</div>
<div class="cell" style="left:369px;top:172px;width:80px;font-size:20px;line-height:23px;letter-spacing:1px;text-indent:1px;color:#0a0a0a">3116</div>
<div class="cell" style="left:449px;top:172px;width:80px;font-size:20px;line-height:23px;letter-spacing:1px;text-indent:1px;color:#0a0a0a">2605</div>
<div class="cell" style="left:529px;top:172px;width:80px;font-size:20px;line-height:23px;letter-spacing:1px;text-indent:1px;color:#0a0a0a">2802</div>
<div class="cell" style="left:609px;top:172px;width:80px;font-size:20px;line-height:23px;letter-spacing:1px;text-indent:1px;color:#0a0a0a">2822</div>
<div class="cell" style="left:689px;top:172px;width:80px;font-size:20px;line-height:23px;letter-spacing:1px;text-indent:1px;color:#0a0a0a">3161</div>
<div class="a" style="left:41px;top:198px;width:877px;height:31px;background:#fff"></div>
<div class="cell" style="left:42px;top:203px;width:167px;font-size:20px;line-height:23px;letter-spacing:1px;text-indent:1px;color:#0a0a0a">Line 4</div>
<div class="cell" style="left:209px;top:203px;width:80px;font-size:20px;line-height:23px;letter-spacing:1px;text-indent:1px;color:#0a0a0a">3612</div>
<div class="cell" style="left:289px;top:203px;width:80px;font-size:20px;line-height:23px;letter-spacing:1px;text-indent:1px;color:#0a0a0a">3757</div>
<div class="cell" style="left:369px;top:203px;width:80px;font-size:20px;line-height:23px;letter-spacing:1px;text-indent:1px;color:#0a0a0a">3417</div>
<div class="cell" style="left:449px;top:203px;width:80px;font-size:20px;line-height:23px;letter-spacing:1px;text-indent:1px;color:#0a0a0a">3477</div>
<div class="cell" style="left:529px;top:203px;width:80px;font-size:20px;line-height:23px;letter-spacing:1px;text-indent:1px;color:#0a0a0a">4001</div>
<div class="cell" style="left:609px;top:203px;width:80px;font-size:20px;line-height:23px;letter-spacing:1px;text-indent:1px;color:#0a0a0a">3160</div>
<div class="cell" style="left:689px;top:203px;width:80px;font-size:20px;line-height:23px;letter-spacing:1px;text-indent:1px;color:#0a0a0a">3451</div>
<div class="a" style="left:41px;top:229px;width:877px;height:31px;background:#dce7f5"></div>
<div class="cell" style="left:42px;top:234px;width:167px;font-size:20px;line-height:23px;letter-spacing:1px;text-indent:1px;color:#0a0a0a">Line 5</div>
<div class="cell" style="left:209px;top:234px;width:80px;font-size:20px;line-height:23px;letter-spacing:1px;text-indent:1px;color:#0a0a0a">4480</div>
<div class="cell" style="left:289px;top:234px;width:80px;font-size:20px;line-height:23px;letter-spacing:1px;text-indent:1px;color:#0a0a0a">2137</div>
<div class="cell" style="left:369px;top:234px;width:80px;font-size:20px;line-height:23px;letter-spacing:1px;text-indent:1px;color:#0a0a0a">2603</div>
<div class="cell" style="left:449px;top:234px;width:80px;font-size:20px;line-height:23px;letter-spacing:1px;text-indent:1px;color:#0a0a0a">3417</div>
<div class="cell" style="left:529px;top:234px;width:80px;font-size:20px;line-height:23px;letter-spacing:1px;text-indent:1px;color:#0a0a0a">3167</div>
<div class="cell" style="left:609px;top:234px;width:80px;font-size:20px;line-height:23px;letter-spacing:1px;text-indent:1px;color:#0a0a0a">2623</div>
<div class="cell" style="left:689px;top:234px;width:80px;font-size:20px;line-height:23px;letter-spacing:1px;text-indent:1px;color:#0a0a0a">4621</div>
<div class="a" style="left:41px;top:260px;width:877px;height:31px;background:#fff"></div>
<div class="cell" style="left:42px;top:265px;width:167px;font-size:20px;line-height:23px;letter-spacing:1px;text-indent:1px;color:#0a0a0a">Line 6</div>
<div class="cell" style="left:209px;top:265px;width:80px;font-size:20px;line-height:23px;letter-spacing:1px;text-indent:1px;color:#0a0a0a">2062</div>
<div class="cell" style="left:289px;top:265px;width:80px;font-size:20px;line-height:23px;letter-spacing:1px;text-indent:1px;color:#0a0a0a">2050</div>
<div class="cell" style="left:369px;top:265px;width:80px;font-size:20px;line-height:23px;letter-spacing:1px;text-indent:1px;color:#0a0a0a">3288</div>
<div class="cell" style="left:449px;top:265px;width:80px;font-size:20px;line-height:23px;letter-spacing:1px;text-indent:1px;color:#0a0a0a">3632</div>
<div class="cell" style="left:529px;top:265px;width:80px;font-size:20px;line-height:23px;letter-spacing:1px;text-indent:1px;color:#0a0a0a">5102</div>
<div class="cell" style="left:609px;top:265px;width:80px;font-size:20px;line-height:23px;letter-spacing:1px;text-indent:1px;color:#0a0a0a">4945</div>
<div class="cell" style="left:689px;top:265px;width:80px;font-size:20px;line-height:23px;letter-spacing:1px;text-indent:1px;color:#0a0a0a">2802</div>
<div class="a" style="left:41px;top:291px;width:877px;height:31px;background:#dce7f5"></div>
<div class="cell" style="left:42px;top:296px;width:167px;font-size:20px;line-height:23px;letter-spacing:1px;text-indent:1px;color:#0a0a0a">Line 7</div>
<div class="cell" style="left:209px;top:296px;width:80px;font-size:20px;line-height:23px;letter-spacing:1px;text-indent:1px;color:#0a0a0a">3974</div>
<div class="cell" style="left:289px;top:296px;width:80px;font-size:20px;line-height:23px;letter-spacing:1px;text-indent:1px;color:#0a0a0a">2771</div>
<div class="cell" style="left:369px;top:296px;width:80px;font-size:20px;line-height:23px;letter-spacing:1px;text-indent:1px;color:#0a0a0a">5256</div>
<div class="cell" style="left:449px;top:296px;width:80px;font-size:20px;line-height:23px;letter-spacing:1px;text-indent:1px;color:#0a0a0a">2377</div>
<div class="cell" style="left:529px;top:296px;width:80px;font-size:20px;line-height:23px;letter-spacing:1px;text-indent:1px;color:#0a0a0a">4339</div>
<div class="cell" style="left:609px;top:296px;width:80px;font-size:20px;line-height:23px;letter-spacing:1px;text-indent:1px;color:#0a0a0a">5372</div>
<div class="cell" style="left:689px;top:296px;width:80px;font-size:20px;line-height:23px;letter-spacing:1px;text-indent:1px;color:#0a0a0a">2761</div>
<div class="a" style="left:41px;top:322px;width:877px;height:31px;background:#fff"></div>
<div class="cell" style="left:42px;top:327px;width:167px;font-size:20px;line-height:23px;letter-spacing:1px;text-indent:1px;color:#0a0a0a">Line 8</div>
<div class="cell" style="left:209px;top:327px;width:80px;font-size:20px;line-height:23px;letter-spacing:1px;text-indent:1px;color:#0a0a0a">3788</div>
<div class="cell" style="left:289px;top:327px;width:80px;font-size:20px;line-height:23px;letter-spacing:1px;text-indent:1px;color:#0a0a0a">3577</div>
<div class="cell" style="left:369px;top:327px;width:80px;font-size:20px;line-height:23px;letter-spacing:1px;text-indent:1px;color:#0a0a0a">5311</div>
<div class="cell" style="left:449px;top:327px;width:80px;font-size:20px;line-height:23px;letter-spacing:1px;text-indent:1px;color:#0a0a0a">3931</div>
<div class="cell" style="left:529px;top:327px;width:80px;font-size:20px;line-height:23px;letter-spacing:1px;text-indent:1px;color:#0a0a0a">3387</div>
<div class="cell" style="left:609px;top:327px;width:80px;font-size:20px;line-height:23px;letter-spacing:1px;text-indent:1px;color:#0a0a0a">2074</div>
<div class="cell" style="left:689px;top:327px;width:80px;font-size:20px;line-height:23px;letter-spacing:1px;text-indent:1px;color:#0a0a0a">2671</div>
<div class="a" style="left:41px;top:353px;width:877px;height:31px;background:#dce7f5"></div>
<div class="cell" style="left:42px;top:358px;width:167px;font-size:20px;line-height:23px;letter-spacing:1px;text-indent:1px;color:#0a0a0a">Line 9</div>
<div class="cell" style="left:209px;top:358px;width:80px;font-size:20px;line-height:23px;letter-spacing:1px;text-indent:1px;color:#0a0a0a">5425</div>
<div class="cell" style="left:289px;top:358px;width:80px;font-size:20px;line-height:23px;letter-spacing:1px;text-indent:1px;color:#0a0a0a">2478</div>
<div class="cell" style="left:369px;top:358px;width:80px;font-size:20px;line-height:23px;letter-spacing:1px;text-indent:1px;color:#0a0a0a">3167</div>
<div class="cell" style="left:449px;top:358px;width:80px;font-size:20px;line-height:23px;letter-spacing:1px;text-indent:1px;color:#0a0a0a">2841</div>
<div class="cell" style="left:529px;top:358px;width:80px;font-size:20px;line-height:23px;letter-spacing:1px;text-indent:1px;color:#0a0a0a">3691</div>
<div class="cell" style="left:609px;top:358px;width:80px;font-size:20px;line-height:23px;letter-spacing:1px;text-indent:1px;color:#0a0a0a">4649</div>
<div class="cell" style="left:689px;top:358px;width:80px;font-size:20px;line-height:23px;letter-spacing:1px;text-indent:1px;color:#0a0a0a">3364</div>
<div class="a" style="left:41px;top:384px;width:877px;height:31px;background:#fff"></div>
<div class="cell" style="left:42px;top:389px;width:167px;font-size:20px;line-height:23px;letter-spacing:1px;text-indent:1px;color:#0a0a0a">Line 10</div>
<div class="cell" style="left:209px;top:389px;width:80px;font-size:20px;line-height:23px;letter-spacing:1px;text-indent:1px;color:#0a0a0a">3129</div>
<div class="cell" style="left:289px;top:389px;width:80px;font-size:20px;line-height:23px;letter-spacing:1px;text-indent:1px;color:#0a0a0a">2376</div>
<div class="cell" style="left:369px;top:389px;width:80px;font-size:20px;line-height:23px;letter-spacing:1px;text-indent:1px;color:#0a0a0a">3993</div>
<div class="cell" style="left:449px;top:389px;width:80px;font-size:20px;line-height:23px;letter-spacing:1px;text-indent:1px;color:#0a0a0a">4856</div>
<div class="cell" style="left:529px;top:389px;width:80px;font-size:20px;line-height:23px;letter-spacing:1px;text-indent:1px;color:#0a0a0a">4246</div>
<div class="cell" style="left:609px;top:389px;width:80px;font-size:20px;line-height:23px;letter-spacing:1px;text-indent:1px;color:#0a0a0a">3772</div>
<div class="cell" style="left:689px;top:389px;width:80px;font-size:20px;line-height:23px;letter-spacing:1px;text-indent:1px;color:#0a0a0a">2217</div>
<div class="a" style="left:41px;top:415px;width:877px;height:31px;background:#dce7f5"></div>
<div class="cell" style="left:42px;top:420px;width:167px;font-size:20px;line-height:23px;letter-spacing:1px;text-indent:1px;color:#0a0a0a">Line 11</div>
<div class="cell" style="left:209px;top:420px;width:80px;font-size:20px;line-height:23px;letter-spacing:1px;text-indent:1px;color:#0a0a0a">5461</div>
<div class="cell" style="left:289px;top:420px;width:80px;font-size:20px;line-height:23px;letter-spacing:1px;text-indent:1px;color:#0a0a0a">3527</div>
<div class="cell" style="left:369px;top:420px;width:80px;font-size:20px;line-height:23px;letter-spacing:1px;text-indent:1px;color:#0a0a0a">3375</div>
<div class="cell" style="left:449px;top:420px;width:80px;font-size:20px;line-height:23px;letter-spacing:1px;text-indent:1px;color:#0a0a0a">4525</div>
<div class="cell" style="left:529px;top:420px;width:80px;font-size:20px;line-height:23px;letter-spacing:1px;text-indent:1px;color:#0a0a0a">2535</div>
<div class="cell" style="left:609px;top:420px;width:80px;font-size:20px;line-height:23px;letter-spacing:1px;text-indent:1px;color:#0a0a0a">4666</div>
<div class="cell" style="left:689px;top:420px;width:80px;font-size:20px;line-height:23px;letter-spacing:1px;text-indent:1px;color:#0a0a0a">3853</div>
<div class="a" style="left:41px;top:105px;width:1px;height:342px;background:#000"></div>
<div class="a" style="left:208px;top:105px;width:1px;height:342px;background:#000"></div>
<div class="a" style="left:288px;top:105px;width:1px;height:342px;background:#000"></div>
<div class="a" style="left:368px;top:105px;width:1px;height:342px;background:#000"></div>
<div class="a" style="left:448px;top:105px;width:1px;height:342px;background:#000"></div>
<div class="a" style="left:528px;top:105px;width:1px;height:342px;background:#000"></div>
<div class="a" style="left:608px;top:105px;width:1px;height:342px;background:#000"></div>
<div class="a" style="left:688px;top:105px;width:1px;height:342px;background:#000"></div>
<div class="a" style="left:768px;top:105px;width:1px;height:342px;background:#000"></div>
<div class="a" style="left:41px;top:105px;width:727px;height:1px;background:#000"></div>
<div class="a" style="left:41px;top:136px;width:727px;height:1px;background:#000"></div>
<div class="a" style="left:41px;top:167px;width:727px;height:1px;background:#000"></div>
<div class="a" style="left:41px;top:198px;width:727px;height:1px;background:#000"></div>
<div class="a" style="left:41px;top:229px;width:727px;height:1px;background:#000"></div>
<div class="a" style="left:41px;top:260px;width:727px;height:1px;background:#000"></div>
<div class="a" style="left:41px;top:291px;width:727px;height:1px;background:#000"></div>
<div class="a" style="left:41px;top:322px;width:727px;height:1px;background:#000"></div>
<div class="a" style="left:41px;top:353px;width:727px;height:1px;background:#000"></div>
<div class="a" style="left:41px;top:384px;width:727px;height:1px;background:#000"></div>
<div class="a" style="left:41px;top:415px;width:727px;height:1px;background:#000"></div>
<div class="a" style="left:41px;top:446px;width:728px;height:1px;background:#000"></div>
<div class="a" style="left:769px;top:136px;width:149px;height:1px;background:#a6bedd"></div>
<div class="a" style="left:769px;top:167px;width:149px;height:1px;background:#a6bedd"></div>
<div class="a" style="left:769px;top:198px;width:149px;height:1px;background:#a6bedd"></div>
<div class="a" style="left:769px;top:229px;width:149px;height:1px;background:#a6bedd"></div>
<div class="a" style="left:769px;top:260px;width:149px;height:1px;background:#a6bedd"></div>
<div class="a" style="left:769px;top:291px;width:149px;height:1px;background:#a6bedd"></div>
<div class="a" style="left:769px;top:322px;width:149px;height:1px;background:#a6bedd"></div>
<div class="a" style="left:769px;top:353px;width:149px;height:1px;background:#a6bedd"></div>
<div class="a" style="left:769px;top:384px;width:149px;height:1px;background:#a6bedd"></div>
<div class="a" style="left:769px;top:415px;width:149px;height:1px;background:#a6bedd"></div>
<div class="a" style="left:769px;top:446px;width:149px;height:1px;background:#a6bedd"></div>
<div class="a" style="left:917px;top:105px;width:1px;height:342px;background:#a6bedd"></div>
<div class="a" style="left:911px;top:441px;width:5px;height:5px;background:#6d8fbf;clip-path:polygon(100% 0,100% 100%,0 100%)"></div>
<div class="a" style="left:607px;top:68px;width:82px;height:38px;border:3px solid #1ea37c"></div>
<div class="a" style="left:685px;top:102px;width:6px;height:6px;background:#1fa383;border:1px solid #fff"></div>
<div class="a" style="left:41px;top:536px;width:877px;height:31px;background:#14a994"></div>
<div class="a" style="left:208px;top:536px;width:1px;height:31px;background:#72c0b2"></div>
<div class="a" style="left:288px;top:536px;width:1px;height:31px;background:#72c0b2"></div>
<div class="a" style="left:368px;top:536px;width:1px;height:31px;background:#72c0b2"></div>
<div class="a" style="left:448px;top:536px;width:1px;height:31px;background:#72c0b2"></div>
<div class="a" style="left:528px;top:536px;width:1px;height:31px;background:#72c0b2"></div>
<div class="a" style="left:608px;top:536px;width:1px;height:31px;background:#72c0b2"></div>
<div class="a" style="left:688px;top:536px;width:1px;height:31px;background:#72c0b2"></div>
<div class="a" style="left:768px;top:536px;width:1px;height:31px;background:#72c0b2"></div>
<div class="cell" style="left:43.2px;top:540px;width:167px;font-size:22px;line-height:26px;color:#f3fbf8;letter-spacing:1.15px">Assembly Line</div>
<div class="cell" style="left:210.2px;top:540px;width:80px;font-size:22px;line-height:26px;color:#f3fbf8;letter-spacing:2px">1/21</div>
<div class="cell" style="left:290.2px;top:540px;width:80px;font-size:22px;line-height:26px;color:#f3fbf8;letter-spacing:2px">1/22</div>
<div class="cell" style="left:370.2px;top:540px;width:80px;font-size:22px;line-height:26px;color:#f3fbf8;letter-spacing:2px">1/23</div>
<div class="cell" style="left:450.2px;top:540px;width:80px;font-size:22px;line-height:26px;color:#f3fbf8;letter-spacing:2px">1/24</div>
<div class="cell" style="left:530.2px;top:540px;width:80px;font-size:22px;line-height:26px;color:#f3fbf8;letter-spacing:2px">1/25</div>
<div class="cell" style="left:610.2px;top:540px;width:80px;font-size:22px;line-height:26px;color:#f3fbf8;letter-spacing:2px">1/26</div>
<div class="cell" style="left:690.2px;top:540px;width:80px;font-size:22px;line-height:26px;color:#f3fbf8;letter-spacing:2px">1/27</div>
<div class="cell" style="left:770.2px;top:540px;width:149px;font-size:22px;line-height:26px;color:#f3fbf8;letter-spacing:1.15px">Weekly total</div></div>

<!-- SHEET BAR -->
<div id="sheetbar" class="a">
  <svg style="left:18px;top:6px" width="12" height="15"><path d="M1 1v13M10.5 1L4 7.5l6.5 6.5" stroke="#a3a9b2" stroke-width="1.2" fill="none"/></svg>
  <svg style="left:52px;top:6px" width="9" height="15"><path d="M7.5 1L1 7.5l6.5 6.5" stroke="#a3a9b2" stroke-width="1.2" fill="none"/></svg>
  <svg style="left:84px;top:6px" width="9" height="15"><path d="M1 1l6.5 6.5L1 14" stroke="#a3a9b2" stroke-width="1.2" fill="none"/></svg>
  <svg style="left:113px;top:6px" width="12" height="15"><path d="M11 1v13M1 1l6.5 6.5L1 14" stroke="#a3a9b2" stroke-width="1.2" fill="none"/></svg>
  <div class="a" style="left:148px;top:-1px;width:85px;height:27px;background:#fff;border-left:1px solid #e6e8eb;border-right:1px solid #e6e8eb"></div>
  <div class="t" style="left:168px;top:7px;font-size:14.5px;font-weight:bold;color:#1f9e7e">Sheet1</div>
  <svg style="left:240px;top:5px" width="17" height="17"><path d="M8.5 1v15M1 8.5h15" stroke="#3d4350" stroke-width="1.5"/></svg>
  <svg style="left:880px;top:6px" width="6" height="13"><path d="M1 0.5v12M4.5 0.5v12" stroke="#b0b5bd" stroke-width="1"/></svg>
  <div class="a" style="left:892px;top:4px;width:603px;height:17px;background:#eceef1"></div>
  <svg style="left:900px;top:8px" width="6" height="9"><path d="M5 0v9L0 4.5z" fill="#8a909a"/></svg>
  <div class="a" style="left:917px;top:5px;width:496px;height:15px;border-radius:7.5px;background:#d5d8de"></div>
  <svg style="left:1463px;top:8px" width="6" height="9"><path d="M0 0v9l5-4.5z" fill="#8a909a"/></svg>
  <svg style="left:1482px;top:6px" width="6" height="13"><path d="M1 0.5v12M4.5 0.5v12" stroke="#b0b5bd" stroke-width="1"/></svg>
</div>
<!-- V SCROLL -->
<div class="a" style="left:1493px;top:236px;width:22px;height:589px;background:#f3f4f6"></div>
<svg style="left:1499px;top:239px" width="12" height="6"><path d="M0 0.8h12M0 4.8h12" stroke="#b9bec6" stroke-width="1"/></svg>
<div class="a" style="left:1497px;top:251px;width:17px;height:574px;background:#eceef1"></div>
<svg style="left:1501px;top:259px" width="9" height="6"><path d="M0 5.5h9L4.5 0z" fill="#8a909a"/></svg>
<div class="a" style="left:1499px;top:276px;width:14px;height:428px;border-radius:7px;background:#d5d8de"></div>
<svg style="left:1501px;top:810px" width="9" height="6"><path d="M0 0h9L4.5 5.5z" fill="#8a909a"/></svg>
<!-- STATUS -->
<div id="status" class="a">
  <svg style="left:17px;top:7px" width="20" height="18"><circle cx="5.5" cy="5.5" r="4.5" stroke="#4a5160" stroke-width="1.4" fill="none"/><circle cx="5.5" cy="5.5" r="1.8" stroke="#4a5160" stroke-width="1.2" fill="none"/><path d="M10 3h6v10h3v3.5H4V12h7.5" stroke="#4a5160" stroke-width="1.4" fill="none"/><path d="M16 3a1.5 1.5 0 0 1 3 0v2h-3" stroke="#4a5160" stroke-width="1.2" fill="none"/></svg>
  <svg style="left:986px;top:7px" width="19" height="19"><rect x="4" y="1" width="13" height="14" rx="1" stroke="#b7bcc4" stroke-width="1.2" fill="#e3e5e9"/><rect x="1" y="4" width="13" height="14" rx="1" stroke="#4a5160" stroke-width="1.4" fill="#fff"/><path d="M6 8v5h4" stroke="#4a5160" stroke-width="1.3" fill="none"/></svg>
  <svg style="left:1015px;top:6px" width="22" height="20"><path d="M8 1h6v6h6.5v6H14v6H8v-6H1.5V7H8z" stroke="#4a5160" stroke-width="1.4" fill="none" stroke-linejoin="round"/><path d="M8 7v6M14 7v6M8 7h6M8 13h6" stroke="#4a5160" stroke-width="1.2"/></svg>
  <div class="dd" style="left:1040px;top:15px;border-width:3.5px 3.5px 0 3.5px;border-top-color:#9aa0a8"></div>
  <div class="a" style="left:1062px;top:6px;width:1px;height:18px;background:#dfe2e6"></div>
  <div class="a" style="left:1072px;top:2px;width:29px;height:28px;background:#dfe1e5"></div>
  <svg style="left:1077px;top:9px" width="20" height="17"><rect x="1" y="1" width="18" height="15" rx="1" stroke="#4a5160" stroke-width="1.5" fill="none"/><path d="M1 6h18M1 11h18M7 1v15M13 1v15" stroke="#4a5160" stroke-width="1.3"/></svg>
  <svg style="left:1109px;top:8px" width="20" height="18"><rect x="1" y="1" width="18" height="16" rx="1" stroke="#4a5160" stroke-width="1.5" fill="none"/><rect x="3.5" y="3.5" width="13" height="11" stroke="#4a5160" stroke-width="1.2" fill="none"/><path d="M10 3.5v11" stroke="#4a5160" stroke-width="1.3"/></svg>
  <svg style="left:1141px;top:8px" width="20" height="18"><rect x="1" y="1" width="18" height="16" stroke="#4a5160" stroke-width="1.5" fill="none"/><path d="M7 1v9h6V1" stroke="#4a5160" stroke-width="1.3" fill="none"/></svg>
  <svg style="left:1171px;top:5px" width="22" height="20"><path d="M1 13c3-5 7-7 10-7s7 2 10 7c-3 5-7 6.5-10 6.5S4 18 1 13z" stroke="#4a5160" stroke-width="1.5" fill="none"/><circle cx="11" cy="13" r="3.2" stroke="#4a5160" stroke-width="1.5" fill="none"/><path d="M11 0.5v3M4 2l2 2.5M18 2l-2 2.5" stroke="#4a5160" stroke-width="1.3"/></svg>
  <div class="dd" style="left:1197px;top:15px;border-width:3.5px 3.5px 0 3.5px;border-top-color:#9aa0a8"></div>
  <div class="a" style="left:1218px;top:6px;width:1px;height:18px;background:#dfe2e6"></div>
  <div class="t" style="left:1229px;top:10px;font-size:14.5px;color:#3c4350">100%</div>
  <div class="dd" style="left:1271px;top:15px;border-width:3.5px 3.5px 0 3.5px;border-top-color:#9aa0a8"></div>
  <div class="a" style="left:1291px;top:15px;width:12px;height:2px;background:#3d4350"></div>
  <div class="a" style="left:1310px;top:16px;width:196px;height:1px;background:#9aa0a8"></div>
  <div class="a" style="left:1396px;top:9px;width:14px;height:14px;border-radius:7px;border:1.3px solid #3d4350;background:#f3f4f6"></div>
  <svg style="left:1504px;top:9px" width="14" height="14"><path d="M7 1v12M1 7h12" stroke="#3d4350" stroke-width="2"/></svg>
  <svg style="left:1533px;top:8px" width="18" height="18"><path d="M1 6V1h5M12 1h5v5M17 12v5h-5M6 17H1v-5M1 1l5 5M17 1l-5 5M17 17l-5-5M1 17l5-5" stroke="#4a5160" stroke-width="1.3" fill="none"/></svg>
</div>
<!-- SIDEBAR -->
<div id="sidebar" class="a">
  <svg style="left:14px;top:14px" width="26" height="6"><path d="M0 1h26M0 4.5h26" stroke="#c5c9cf" stroke-width="1.1"/></svg>
  <svg style="left:17px;top:44px" width="20" height="20"><rect x="1" y="6" width="3" height="13" rx="1" stroke="#b3b8c0" stroke-width="1.2" fill="none"/><rect x="1" y="1" width="3" height="2.5" rx="0.8" stroke="#b3b8c0" stroke-width="1.1" fill="none"/><rect x="7" y="1" width="12" height="3" rx="1" stroke="#b3b8c0" stroke-width="1.2" fill="none"/><path d="M16 8.5v7.5H9M18.5 11L16 8.5 13.5 11M11 13.5L8.5 16l2.5 2.5" stroke="#b3b8c0" stroke-width="1.3" fill="none"/></svg>
  <svg style="left:19px;top:88px" width="18" height="22"><path d="M1.5 1.5v17l4.5-4 3.2 6.5 2.8-1.4-3.2-6.3h6z" stroke="#3d4350" stroke-width="1.5" fill="none" stroke-linejoin="round"/></svg>
  <svg style="left:16px;top:134px" width="22" height="20"><circle cx="4" cy="4" r="3" stroke="#b3b8c0" stroke-width="1.2" fill="none"/><path d="M7 4h14M1 15.5h12M19 15.5h2" stroke="#b3b8c0" stroke-width="1.3"/><circle cx="16" cy="15.5" r="3" stroke="#b3b8c0" stroke-width="1.2" fill="none"/></svg>
  <svg style="left:16px;top:178px" width="22" height="22"><path d="M3.5 7.5A9 9 0 1 1 2.5 13" stroke="#3d4350" stroke-width="1.5" fill="none"/><path d="M1 5.5l2.5 3 3.5-1.5" stroke="#3d4350" stroke-width="1.5" fill="none"/><path d="M11.5 5.5v5.5h4.5" stroke="#3d4350" stroke-width="1.5" fill="none"/></svg>
  <svg style="left:16px;top:223px" width="22" height="22"><circle cx="11" cy="11" r="9.8" stroke="#3d4350" stroke-width="1.4" fill="none"/><path d="M7.5 8.2a3.5 3.5 0 1 1 4.5 3.3c-0.8 0.3-1 0.8-1 1.5v1.2" stroke="#3d4350" stroke-width="1.4" fill="none"/><circle cx="11" cy="16.8" r="1" fill="#3d4350"/></svg>
  <div class="a" style="left:0;top:618px;width:53px;height:1px;background:#e3e5e9"></div>
  <svg style="left:17px;top:640px" width="20" height="20"><rect x="1" y="1" width="7" height="7" rx="2" stroke="#b3b8c0" stroke-width="1.2" fill="none"/><rect x="11" y="1" width="7" height="7" rx="2" stroke="#b3b8c0" stroke-width="1.2" fill="none"/><rect x="1" y="11" width="7" height="7" rx="2" stroke="#b3b8c0" stroke-width="1.2" fill="none"/><rect x="11" y="11" width="7" height="7" rx="2" stroke="#b3b8c0" stroke-width="1.2" fill="none"/></svg>
</div>
<!-- OVERLAYS -->
<div class="a" style="left:662px;top:308px;width:60px;height:60px;border-radius:30px;background:rgba(248,198,20,0.6)"></div>
<svg style="left:690px;top:336px" width="22" height="38"><path d="M2.2 2.2V27.7L7.9 22.6L14.5 34.3L17.8 32.3L11.9 20.5L20.1 19.8Z" fill="#fff" stroke="#111" stroke-width="1.3" stroke-linejoin="round"/></svg>
<!-- WATERMARK -->
<svg style="left:1296px;top:832px" width="70" height="49" viewBox="0 0 70 49">
  <defs><linearGradient id="wg1" gradientUnits="userSpaceOnUse" x1="0" y1="0" x2="0" y2="49"><stop offset="0" stop-color="#1570ee"/><stop offset="0.3" stop-color="#1b78f0"/><stop offset="0.5" stop-color="#3a94f6"/><stop offset="0.8" stop-color="#5b9bef"/><stop offset="1" stop-color="#80b8f6"/></linearGradient>
  <linearGradient id="wg2" gradientUnits="userSpaceOnUse" x1="0" y1="0" x2="0" y2="49"><stop offset="0" stop-color="#7ab4f4"/><stop offset="0.5" stop-color="#4c94f2"/><stop offset="1" stop-color="#7fb7f6"/></linearGradient></defs>
  <path d="M28.5 13.5L31.5 4.8H4.8L24 43.8" stroke="url(#wg1)" stroke-width="9.6" fill="none" stroke-linejoin="round" stroke-linecap="round"/>
  <path d="M45 4.8H65.2L46.5 43.8L41.5 28" stroke="url(#wg1)" stroke-width="9.6" fill="none" stroke-linejoin="round" stroke-linecap="round"/>
  <path d="M24 43.8L45.5 4.8" stroke="url(#wg2)" stroke-width="9.6" fill="none" stroke-linecap="round"/>
</svg>
<svg style="left:1370px;top:828px" width="200" height="40" viewBox="0 0 1584 317"><g stroke="#38383b" stroke-width="16.5" fill="none" stroke-linecap="round" stroke-linejoin="round"><path d="M48 62 L100 188 L150 92 L195 188 L232 100"/><path d="M232 62 V188 M232 62 H305 A33 33 0 0 1 305 128 H232"/><path d="M505 62 H412 A32 32 0 0 0 412 126 H470 A32 32 0 0 1 470 188 H372"/><path d="M592 188 L652 62 L714 188 M625 150 H680"/><path d="M828 110 A48 48 0 1 0 828 175"/><path d="M940 95 V188 M940 141 A47 47 0 1 1 940 140"/><path d="M1073 58 V188 M1073 141 A48 48 0 1 1 1073 140"/><path d="M1098 141 H1192 A47 47 0 1 0 1180 172"/><path d="M1218 95 V188 M1218 130 A35 35 0 0 1 1290 130 V188 M1290 130 A35 35 0 0 1 1362 130 V188"/><path d="M1392 95 L1445 188 M1497 95 L1410 238"/></g></svg>
<div class="t" style="left:1375px;top:865px;font-size:14px;color:#48484c;letter-spacing:0.9px">Learn office suite tutorials</div>
</body></html>
